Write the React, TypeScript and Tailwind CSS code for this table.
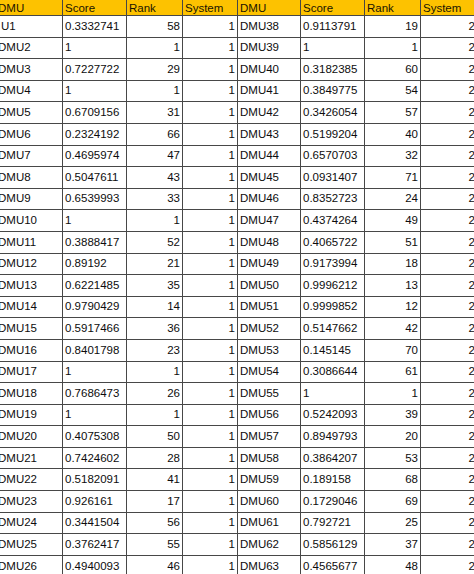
type Row = [string, string, number, number];

const left: Row[] = [
  ["U1", "0.3332741", 58, 1],
  ["DMU2", "1", 1, 1],
  ["DMU3", "0.7227722", 29, 1],
  ["DMU4", "1", 1, 1],
  ["DMU5", "0.6709156", 31, 1],
  ["DMU6", "0.2324192", 66, 1],
  ["DMU7", "0.4695974", 47, 1],
  ["DMU8", "0.5047611", 43, 1],
  ["DMU9", "0.6539993", 33, 1],
  ["DMU10", "1", 1, 1],
  ["DMU11", "0.3888417", 52, 1],
  ["DMU12", "0.89192", 21, 1],
  ["DMU13", "0.6221485", 35, 1],
  ["DMU14", "0.9790429", 14, 1],
  ["DMU15", "0.5917466", 36, 1],
  ["DMU16", "0.8401798", 23, 1],
  ["DMU17", "1", 1, 1],
  ["DMU18", "0.7686473", 26, 1],
  ["DMU19", "1", 1, 1],
  ["DMU20", "0.4075308", 50, 1],
  ["DMU21", "0.7424602", 28, 1],
  ["DMU22", "0.5182091", 41, 1],
  ["DMU23", "0.926161", 17, 1],
  ["DMU24", "0.3441504", 56, 1],
  ["DMU25", "0.3762417", 55, 1],
  ["DMU26", "0.4940093", 46, 1],
];

const right: Row[] = [
  ["DMU38", "0.9113791", 19, 2],
  ["DMU39", "1", 1, 2],
  ["DMU40", "0.3182385", 60, 2],
  ["DMU41", "0.3849775", 54, 2],
  ["DMU42", "0.3426054", 57, 2],
  ["DMU43", "0.5199204", 40, 2],
  ["DMU44", "0.6570703", 32, 2],
  ["DMU45", "0.0931407", 71, 2],
  ["DMU46", "0.8352723", 24, 2],
  ["DMU47", "0.4374264", 49, 2],
  ["DMU48", "0.4065722", 51, 2],
  ["DMU49", "0.9173994", 18, 2],
  ["DMU50", "0.9996212", 13, 2],
  ["DMU51", "0.9999852", 12, 2],
  ["DMU52", "0.5147662", 42, 2],
  ["DMU53", "0.145145", 70, 2],
  ["DMU54", "0.3086644", 61, 2],
  ["DMU55", "1", 1, 2],
  ["DMU56", "0.5242093", 39, 2],
  ["DMU57", "0.8949793", 20, 2],
  ["DMU58", "0.3864207", 53, 2],
  ["DMU59", "0.189158", 68, 2],
  ["DMU60", "0.1729046", 69, 2],
  ["DMU61", "0.792721", 25, 2],
  ["DMU62", "0.5856129", 37, 2],
  ["DMU63", "0.4565677", 48, 2],
];

const headers = ["DMU", "Score", "Rank", "System", "DMU", "Score", "Rank", "System"];
const widths = ["w-[67px]", "w-[64px]", "w-[56px]", "w-[55px]", "w-[63px]", "w-[64px]", "w-[56px]", "w-[60px]"];

const cell = "border border-[#474747] px-[2px] whitespace-nowrap overflow-hidden";

export default function App() {
  return (
    <div
      className="w-[474px] h-[574px] overflow-hidden bg-white text-[#0d0d0d]"
      style={{ fontFamily: '"Liberation Sans", Arial, sans-serif' }}
    >
      <table className="-ml-[5px] -mt-[1px] table-fixed border-collapse text-[11.5px] w-[485px]">
        <colgroup>
          {widths.map((w, i) => (
            <col key={i} className={w} />
          ))}
        </colgroup>
        <thead>
          <tr className="h-[15px] bg-[#fdc200]">
            {headers.map((h, i) => (
              <th key={i} className={`${cell} font-normal text-left leading-[13px] pt-[2px] pb-0 align-bottom text-[#1a1400]`}>
                {h}
              </th>
            ))}
          </tr>
        </thead>
        <tbody>
          {left.map((l, i) => {
            const r = right[i];
            return (
              <tr key={i} className="h-[21.6px]">
                <td className={`${cell} ${i === 0 ? "pl-[5px]" : ""}`}>{l[0]}</td>
                <td className={cell}>{l[1]}</td>
                <td className={`${cell} text-right`}>{l[2]}</td>
                <td className={`${cell} text-right`}>{l[3]}</td>
                <td className={cell}>{r[0]}</td>
                <td className={cell}>{r[1]}</td>
                <td className={`${cell} text-right`}>{r[2]}</td>
                <td className={`${cell} text-right pr-[5px]`}>{r[3]}</td>
              </tr>
            );
          })}
        </tbody>
      </table>
    </div>
  );
}
